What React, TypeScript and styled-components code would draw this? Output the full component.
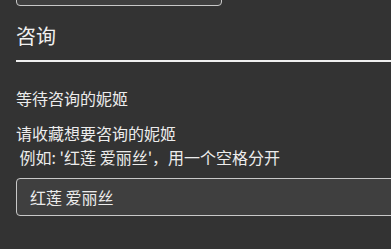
import React from "react";
import styled, { createGlobalStyle } from "styled-components";

const Global = createGlobalStyle`
  html, body {
    margin: 0;
    padding: 0;
    background: #333333;
    overflow: hidden;
  }
  body {
    font-family: "Noto Sans CJK SC", "Noto Sans", sans-serif;
    color: #e8e8e8;
  }
`;

const Page = styled.div`
  width: 420px;
  height: 249px;
  padding-left: 16px;
  box-sizing: border-box;
  display: flex;
  flex-direction: column;
`;

const TopField = styled.div`
  width: 206px;
  height: 38px;
  margin-top: -32px;
  box-sizing: border-box;
  border: 1px solid #c8c8c8;
  border-radius: 4px;
  background: #3f3f3f;
`;

const Heading = styled.h2`
  margin: 15px 0 0;
  padding-bottom: 9px;
  font-size: 20px;
  line-height: 30px;
  font-weight: 400;
  color: #f0f0f0;
  border-bottom: 2px solid #f0f0f0;
`;

const Label = styled.div<{ $gap: number }>`
  margin-top: ${(p) => p.$gap}px;
  font-size: 16px;
  line-height: 24px;
  color: #ececec;
  white-space: pre;
`;

const Field = styled.div`
  margin-top: 9px;
  height: 38px;
  box-sizing: border-box;
  border: 1px solid #c8c8c8;
  border-radius: 4px;
  background: #3f3f3f;
  padding: 0 13px;
  display: flex;
  align-items: center;
  font-size: 16px;
  color: #ececec;
`;

export default function App() {
  return (
    <>
      <Global />
      <Page>
        <TopField />
        <Heading>咨询</Heading>
        <Label $gap={24}>等待咨询的妮姬</Label>
        <Label $gap={11}>请收藏想要咨询的妮姬</Label>
        <Label $gap={0}>{" 例如: '红莲 爱丽丝'，用一个空格分开"}</Label>
        <Field>红莲 爱丽丝</Field>
      </Page>
    </>
  );
}
